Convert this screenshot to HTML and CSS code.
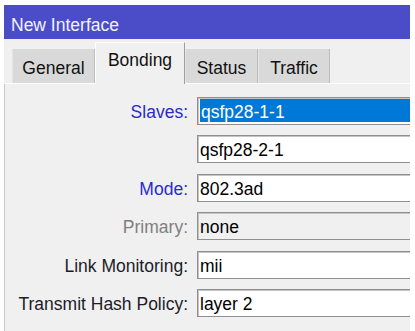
FILE: index.html
```html
<!DOCTYPE html>
<html lang="en">
<head>
    <meta charset="UTF-8">
    <title>New Interface</title>
    <link rel="stylesheet" href="styles.css">
</head>
<body>
    <div class="window">
        <div class="title-bar">New Interface</div>
        <div class="tab-strip">
            <span class="tab">General</span>
            <span class="tab active">Bonding</span>
            <span class="tab">Status</span>
            <span class="tab">Traffic</span>
        </div>
        <div class="panel">
            <label class="label accent">Slaves:</label>
            <div class="field selected"><span class="selection">qsfp28-1-1</span></div>

            <span class="label"></span>
            <div class="field">qsfp28-2-1</div>

            <label class="label accent">Mode:</label>
            <div class="field">802.3ad</div>

            <label class="label muted">Primary:</label>
            <div class="field disabled">none</div>

            <label class="label">Link Monitoring:</label>
            <div class="field">mii</div>

            <label class="label">Transmit Hash Policy:</label>
            <div class="field">layer 2</div>
        </div>
    </div>
</body>
</html>
```

FILE: styles.css
```css
html, body {
    margin: 0;
    height: 100%;
}
*, *::before, *::after {
    box-sizing: border-box;
}
body {
    background-color: #fff;
    font-family: "Liberation Sans", Arial, sans-serif;
    font-size  : 17.5px;
    overflow   : hidden;
}
.window {
    margin  : 5px 5px 0 4px;
    height  : 326px;
    overflow: hidden;

    display: flex;
    flex-direction: column;
    background-color: #f0f0f0;
}
.title-bar {
    height     : 34px;
    padding    : 10px 0 0 7px;
    line-height: 20px;

    color           : #f2f2ff;
    background-color: #4b4dc8;
}
.tab-strip {
    height : 45px;
    padding: 0 0 0 8px;

    display    : flex;
    align-items: flex-end;
    border-bottom: 1px solid #fff;
}
.tab {
    height     : 34px;
    padding-top: 9px;
    line-height: 20px;
    text-align : center;

    color           : #111;
    background-color: #d9d9d9;
    border-left : 1px solid #e4e4e4;
    border-right: 1px solid #bdbdbd;
}
.tab:nth-child(1) { width: 83px; }
.tab:nth-child(2) { width: 90px; }
.tab:nth-child(3) { width: 73px; }
.tab:nth-child(4) { width: 72px; }
.tab.active {
    height     : 42px;
    padding-top: 7px;
    margin-bottom: -1px;

    background-color: #f0f0f0;
    border-top  : 1px solid #fff;
    border-left : 1px solid #fff;
    border-right: 1px solid #a0a0a0;
}
.panel {
    flex   : 1;
    padding: 13px 0 0 0;
    border-left: 1px solid #c8c8c8;

    display: grid;
    grid-template-columns: 183px 1fr;
    grid-auto-rows: 28px;
    column-gap: 9px;
    row-gap   : 10.4px;
}
.label {
    padding-top: 5px;
    line-height: 20px;
    text-align : right;
    white-space: nowrap;

    color: #1c1c28;
}
.label.accent {
    color: #2a2ad0;
}
.label.muted {
    color: #7f7f7f;
}
.field {
    margin-right: -4px;
    padding     : 4px 0 0 2px;
    line-height : 20px;

    color           : #000;
    background-color: #fff;
    border    : 1px solid #8f8f8f;
    box-shadow: inset 1px 1px 0 #c4c4c4;
}
.field.disabled {
    background-color: #f0f0f0;
}
.field.selected {
    padding: 1px 0 0 2px;
}
.selection {
    display: block;
    height : 23px;
    padding: 3px 0 0 1px;

    color           : #fff;
    background-color: #0078d7;
}
```
